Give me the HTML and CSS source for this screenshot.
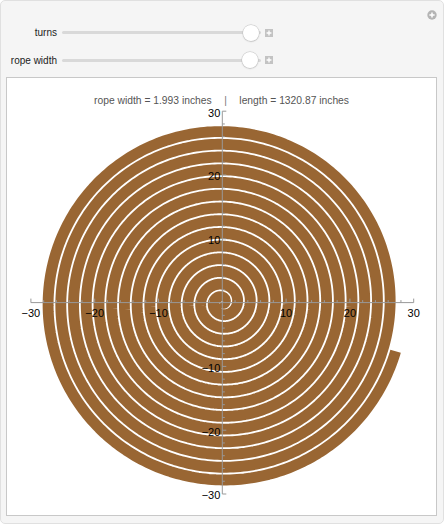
FILE: index.html
```html
<!DOCTYPE html>
<html>
<head>
<meta charset="utf-8">
<link rel="stylesheet" href="styles.css">
</head>
<body>
<div class="panel">
  <div class="topbar">
    <svg class="addbtn" width="10" height="10" viewBox="0 0 10 10"><circle cx="5" cy="5" r="4.7" fill="#b4b4b4"/><path d="M5 2.4v5.2M2.4 5h5.2" stroke="#fff" stroke-width="1.5"/></svg>
  </div>
  <div class="ctrl">
    <span class="clabel">turns</span>
    <div class="track"><div class="bar"></div><span class="thumb" style="left:180.7px"></span></div>
    <svg class="plus" width="8" height="8" viewBox="0 0 8 8"><rect width="8" height="8" fill="#c3c3c3"/><path d="M4 1.6v4.8M1.6 4h4.8" stroke="#fff" stroke-width="1.3"/></svg>
  </div>
  <div class="ctrl">
    <span class="clabel">rope width</span>
    <div class="track"><div class="bar"></div><span class="thumb" style="left:180px"></span></div>
    <svg class="plus" width="8" height="8" viewBox="0 0 8 8"><rect width="8" height="8" fill="#c3c3c3"/><path d="M4 1.6v4.8M1.6 4h4.8" stroke="#fff" stroke-width="1.3"/></svg>
  </div>
  <div class="plot">
    <div class="header"><span>rope width = 1.993 inches</span><span class="sep">|</span><span>length = 1320.87 inches</span></div>
    <svg class="chart" width="429" height="407" viewBox="0 0 429 407">
      <path id="spiral" fill="none" stroke="#996633" stroke-width="10.9" stroke-linejoin="round"/>
      <path id="axes" fill="none" stroke="#999999" stroke-width="1"/>
      <g class="ticks">
        <text x="23.9" y="209" text-anchor="middle">−30</text>
        <text x="87.7" y="209" text-anchor="middle">−20</text>
        <text x="151.5" y="209" text-anchor="middle">−10</text>
        <text x="279.1" y="209" text-anchor="middle">10</text>
        <text x="342.9" y="209" text-anchor="middle">20</text>
        <text x="406.7" y="209" text-anchor="middle">30</text>
        <text x="213.3" y="8.6" text-anchor="end">30</text>
        <text x="213.3" y="72.4" text-anchor="end">20</text>
        <text x="213.3" y="136.2" text-anchor="end">10</text>
        <text x="213.3" y="263.8" text-anchor="end">−10</text>
        <text x="213.3" y="327.6" text-anchor="end">−20</text>
        <text x="213.3" y="391.4" text-anchor="end">−30</text>
      </g>
    </svg>
  </div>
</div>
<script src="script.js"></script>
</body>
</html>
```
FILE: styles.css
```css
body {
  margin: 0;
  font-family: "Liberation Sans", Arial, sans-serif;
}
.panel {
  box-sizing: border-box;
  width: 444px;
  height: 524px;
  background: #f5f5f5;
  border: 1px solid #e0e0e0;
  border-radius: 5px;
  padding: 9px 6px 0 5px;
}
.topbar {
  height: 10px;
  display: flex;
  justify-content: flex-end;
}
.addbtn { display: block; }
.ctrl {
  display: flex;
  align-items: center;
  height: 18px;
  margin-top: 3.5px;
  padding-left: 1px;
}
.ctrl + .ctrl { margin-top: 9.5px; }
.clabel {
  width: 50px;
  margin-right: 5px;
  text-align: right;
  font-size: 10px;
  color: #222;
  white-space: nowrap;
}
.track {
  position: relative;
  width: 199px;
  height: 18px;
  display: flex;
  align-items: center;
}
.bar {
  flex: 1;
  height: 3px;
  background: #d9d9d9;
  border-radius: 1.5px;
}
.thumb {
  position: absolute;
  top: 1px;
  width: 16px;
  height: 16px;
  border-radius: 50%;
  background: #fff;
  box-shadow: 0 0 0 0.5px #c6c6c6, 0 0.5px 1.5px rgba(0, 0, 0, 0.28);
}
.plus {
  display: block;
  margin-left: 4px;
}
.plot {
  box-sizing: border-box;
  margin-top: 8px;
  height: 439px;
  background: #fff;
  border: 1px solid #c8c8c8;
}
.header {
  padding-top: 16px;
  height: 14px;
  line-height: 14px;
  font-size: 10.3px;
  color: #555;
  text-align: center;
  white-space: nowrap;
}
.sep {
  margin: 0 12.5px;
  color: #777;
}
.chart { display: block; }
.ticks text {
  font-family: "Liberation Sans", Arial, sans-serif;
  font-size: 11px;
  fill: #000;
}
```
FILE: script.js
```js
(function () {
  var cx = 215.3, cy = 194.6, s = 6.38;
  var pitch = 12.72;
  var b = pitch / (2 * Math.PI);
  var rEnd = 180;
  var tEnd = rEnd / b;
  var endAng = 344.3 * Math.PI / 180;
  var phi = endAng - tEnd;
  var pts = [];
  for (var t = 0; t < tEnd; t += 0.02) {
    var r = b * t;
    pts.push((cx + r * Math.cos(t + phi)).toFixed(2) + ' ' + (cy - r * Math.sin(t + phi)).toFixed(2));
  }
  var r2 = b * tEnd;
  pts.push((cx + r2 * Math.cos(tEnd + phi)).toFixed(2) + ' ' + (cy - r2 * Math.sin(tEnd + phi)).toFixed(2));
  document.getElementById('spiral').setAttribute('d', 'M' + pts.join(' L'));

  function X(u) { return cx + s * u; }
  function Y(v) { return cy - s * v; }
  var d = 'M' + X(-30) + ' ' + cy + ' H' + X(30) + ' M' + cx + ' ' + Y(30) + ' V' + Y(-30);
  for (var u = -30; u <= 30; u += 2) {
    if (u === 0) continue;
    var len = (u % 10 === 0) ? 4 : 2.5;
    d += ' M' + X(u) + ' ' + cy + ' v' + (-len);
    d += ' M' + cx + ' ' + Y(u) + ' h' + len;
  }
  document.getElementById('axes').setAttribute('d', d);
})();
```
